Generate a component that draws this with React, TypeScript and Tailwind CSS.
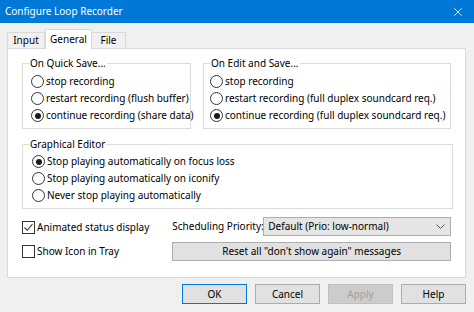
import { X } from 'lucide-react';

type RadioProps = { label: string; checked?: boolean };

function Radio({ label, checked }: RadioProps) {
  return (
    <div className="flex h-[17px] items-center gap-[2px]">
      <span className="flex h-[13px] w-[13px] shrink-0 items-center justify-center rounded-full border border-[#333333] bg-white">
        {checked && <span className="h-[6px] w-[6px] rounded-full bg-[#1a1a1a]" />}
      </span>
      <span className="whitespace-nowrap">{label}</span>
    </div>
  );
}

function Check({ label, checked }: RadioProps) {
  return (
    <div className="flex h-[17px] items-center gap-[2px]">
      <span className="flex h-[13px] w-[13px] shrink-0 items-center justify-center border border-[#333333] bg-white">
        {checked && (
          <svg width="11" height="11" viewBox="0 0 11 11">
            <path d="M1.5 5.5 L4.2 8.3 L9.5 2.2" fill="none" stroke="#333" strokeWidth="1.1" />
          </svg>
        )}
      </span>
      <span className="whitespace-nowrap">{label}</span>
    </div>
  );
}

function Group({ title, className, children }: { title: string; className?: string; children: React.ReactNode }) {
  return (
    <div className={`relative border border-[#dcdcdc] ${className ?? ''}`}>
      <span className="absolute left-[6px] top-[-8px] bg-white px-[1px] leading-[14px]">{title}</span>
      {children}
    </div>
  );
}

export default function App() {
  const btn = 'flex h-[20px] w-[65px] items-center justify-center border';
  return (
    <div
      className="flex h-[312px] w-[474px] flex-col overflow-hidden bg-[#f0f0f0] text-[10px] text-black"
      style={{ fontFamily: '"Noto Sans", "Segoe UI", sans-serif' }}
    >
      <div className="flex h-[23px] shrink-0 items-center justify-between bg-[#0078d7] pl-[5px] pr-[9px] text-white">
        <span className="text-[10px]">Configure Loop Recorder</span>
        <X className="h-[14px] w-[14px]" strokeWidth={1.4} />
      </div>

      {/* tabs */}
      <div className="mt-[6px] flex h-[19px] items-end pl-[7px]">
        <div className="flex h-[16px] w-[38px] items-center justify-center border border-b-0 border-[#d9d9d9] bg-[#f0f0f0]">Input</div>
        <div className="relative z-10 mb-[-1px] flex h-[20px] w-[47px] items-center justify-center border border-b-0 border-[#d9d9d9] bg-white">General</div>
        <div className="flex h-[16px] w-[34px] items-center justify-center border border-b-0 border-l-0 border-[#d9d9d9] bg-[#f0f0f0]">File</div>
      </div>

      {/* panel */}
      <div className="mx-[7px] flex h-[230px] w-[459px] flex-col border border-[#d9d9d9] bg-white px-[14px] pt-[14px]">
        <div className="flex gap-[12px]">
          <Group title="On Quick Save..." className="h-[66px] w-[169px] pl-[8px] pt-[9px]">
            <Radio label="stop recording" />
            <Radio label="restart recording (flush buffer)" />
            <Radio label="continue recording (share data)" checked />
          </Group>
          <Group title="On Edit and Save..." className="h-[66px] w-[250px] pl-[6px] pt-[9px]">
            <Radio label="stop recording" />
            <Radio label="restart recording (full duplex soundcard req.)" />
            <Radio label="continue recording (full duplex soundcard req.)" checked />
          </Group>
        </div>

        <Group title="Graphical Editor" className="mt-[15px] h-[65px] w-[431px] pl-[9px] pt-[8px]">
          <Radio label="Stop playing automatically on focus loss" checked />
          <Radio label="Stop playing automatically on iconify" />
          <Radio label="Never stop playing automatically" />
        </Group>

        <div className="mt-[8px] flex">
          <div className="flex w-[151px] flex-col gap-[7px] pt-[2px]">
            <Check label="Animated status display" checked />
            <Check label="Show Icon in Tray" />
          </div>
          <div className="flex w-[280px] flex-col gap-[6px]">
            <div className="flex items-center">
              <span className="w-[91px] whitespace-nowrap">Scheduling Priority:</span>
              <div className="flex h-[19px] flex-1 items-center justify-between border border-[#adadad] bg-[#e5e5e5] pl-[4px] pr-[5px]">
                <span>Default (Prio: low-normal)</span>
                <svg width="9" height="5" viewBox="0 0 9 5">
                  <path d="M0.5 0.5 L4.5 4.5 L8.5 0.5" fill="none" stroke="#555" strokeWidth="1" />
                </svg>
              </div>
            </div>
            <div className="flex h-[19px] items-center justify-center border border-[#adadad] bg-[#e1e1e1]">
              Reset all "don't show again" messages
            </div>
          </div>
        </div>
      </div>

      {/* buttons */}
      <div className="mt-[6px] flex justify-end gap-[8px] pr-[8px]">
        <div className={`${btn} border-[#0078d7] bg-[#e1e1e1]`}>OK</div>
        <div className={`${btn} border-[#adadad] bg-[#e1e1e1]`}>Cancel</div>
        <div className={`${btn} border-[#bfbfbf] bg-[#cccccc] text-[#a0a0a0]`}>Apply</div>
        <div className={`${btn} border-[#adadad] bg-[#e1e1e1]`}>Help</div>
      </div>
    </div>
  );
}
